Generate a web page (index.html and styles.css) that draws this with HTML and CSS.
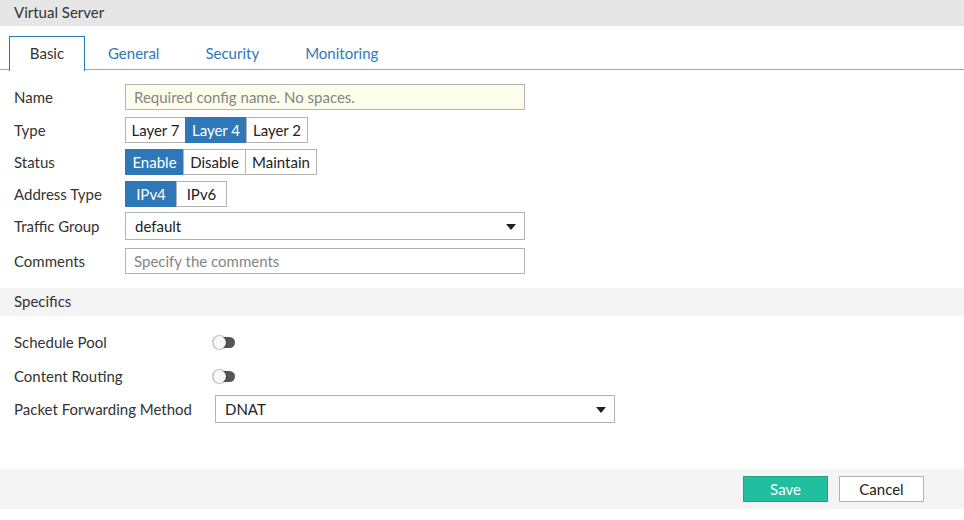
FILE: index.html
```html
<!DOCTYPE html>
<html>
<head>
<meta charset="utf-8">
<link rel="stylesheet" href="styles.css">
</head>
<body>
<div class="header">Virtual Server</div>
<div class="tabs">
  <div class="tab active">Basic</div>
  <div class="tab">General</div>
  <div class="tab">Security</div>
  <div class="tab">Monitoring</div>
</div>
<div class="form">
  <div class="row r-name">
    <div class="label">Name</div>
    <div class="input required"><span class="ph">Required config name. No spaces.</span></div>
  </div>
  <div class="row r-type">
    <div class="label">Type</div>
    <div class="seg">
      <div class="btn b1">Layer 7</div>
      <div class="btn b2 on">Layer 4</div>
      <div class="btn b2">Layer 2</div>
    </div>
  </div>
  <div class="row r-status">
    <div class="label">Status</div>
    <div class="seg">
      <div class="btn b3 on">Enable</div>
      <div class="btn b4">Disable</div>
      <div class="btn b5">Maintain</div>
    </div>
  </div>
  <div class="row r-addr">
    <div class="label">Address Type</div>
    <div class="seg">
      <div class="btn b6 on">IPv4</div>
      <div class="btn b7">IPv6</div>
    </div>
  </div>
  <div class="row r-traffic">
    <div class="label">Traffic Group</div>
    <div class="select"><span>default</span><span class="caret"></span></div>
  </div>
  <div class="row r-comments">
    <div class="label">Comments</div>
    <div class="input"><span class="ph">Specify the comments</span></div>
  </div>
</div>
<div class="band">Specifics</div>
<div class="form spec">
  <div class="row r-sched">
    <div class="label wide">Schedule Pool</div>
    <div class="toggle"><span class="knob"></span></div>
  </div>
  <div class="row r-content">
    <div class="label wide">Content Routing</div>
    <div class="toggle"><span class="knob"></span></div>
  </div>
  <div class="row r-packet">
    <div class="label wide">Packet Forwarding Method</div>
    <div class="select"><span>DNAT</span><span class="caret"></span></div>
  </div>
</div>
<div class="footer">
  <div class="fbtn save">Save</div>
  <div class="fbtn cancel">Cancel</div>
</div>
</body>
</html>
```
FILE: styles.css
```css
* { box-sizing: border-box; }
html, body { margin: 0; padding: 0; background: #fff; }
body {
  font-family: Lato, "Open Sans", "Liberation Sans", sans-serif;
  font-size: 15px;
  color: #333;
  width: 964px;
  height: 520px;
  overflow: hidden;
}
.header {
  height: 26px;
  line-height: 25px;
  background: #e6e6e6;
  padding-left: 14px;
  color: #333;
}
.tabs {
  margin-top: 10px;
  height: 34px;
  border-bottom: 1px solid #a6a6a6;
  display: flex;
  padding-left: 9px;
}
.tab {
  height: 34px;
  line-height: 33px;
  padding: 0 22px;
  color: #2f78b8;
  border: 1px solid transparent;
  border-bottom: none;
}
.tab.active {
  color: #333;
  background: #fff;
  border-color: #2f78b8;
  padding: 0;
  text-align: center;
  height: 35px;
  width: 76px;
}
.form { padding-left: 14px; }
.row { display: flex; align-items: center; }
.label { width: 111px; flex: none; color: #333; }
.label.wide { width: 199px; }
.r-name { margin-top: 14px; height: 26px; }
.r-type { margin-top: 7px; height: 26px; }
.r-status { margin-top: 6px; height: 26px; }
.r-addr { margin-top: 6px; height: 26px; }
.r-traffic { margin-top: 5px; height: 28px; }
.r-comments { margin-top: 8px; height: 26px; }
.input {
  width: 400px;
  height: 26px;
  border: 1px solid #b3b3b3;
  padding-left: 8px;
  display: flex;
  align-items: center;
  background: #fff;
}
.input.required { background: #fdfdeb; }
.ph { color: #858585; }
.seg { display: flex; height: 26px; }
.btn {
  height: 26px;
  border: 1px solid #b3b3b3;
  margin-left: -1px;
  display: flex;
  align-items: center;
  justify-content: center;
  background: #fff;
  color: #222;
  white-space: nowrap;
}
.btn:first-child { margin-left: 0; }
.btn.on { background: #2f78b8; border-color: #2f78b8; color: #fff; }
.b1 { width: 61px; }
.b2 { width: 62px; }
.b3 { width: 59px; }
.b4 { width: 63px; }
.b5 { width: 72px; }
.b6 { width: 52px; }
.b7 { width: 51px; }
.select {
  width: 400px;
  height: 28px;
  border: 1px solid #b3b3b3;
  padding: 0 8px 0 9px;
  display: flex;
  align-items: center;
  justify-content: space-between;
  background: #fff;
  color: #222;
}
.caret {
  width: 0;
  height: 0;
  border-left: 5px solid transparent;
  border-right: 5px solid transparent;
  border-top: 6px solid #222;
  margin-top: 1px;
}
.band {
  margin-top: 14px;
  height: 28px;
  line-height: 27px;
  background: #f4f4f4;
  padding-left: 14px;
}
.r-sched { margin-top: 12px; height: 28px; }
.r-content { margin-top: 6px; height: 28px; }
.r-packet { margin-top: 5px; height: 28px; }
.spec .select { margin-left: 2px; }
.toggle {
  position: relative;
  width: 22px;
  height: 11px;
  border-radius: 6px;
  background: #555;
}
.knob {
  position: absolute;
  left: 0;
  top: -1px;
  width: 13px;
  height: 13px;
  border-radius: 50%;
  background: #f7f7f7;
  box-shadow: 0 0 1px 1px rgba(0,0,0,0.25);
}
.footer {
  margin-top: 46px;
  height: 40px;
  background: #f4f4f4;
  display: flex;
  align-items: center;
  justify-content: flex-end;
  padding-right: 40px;
  gap: 11px;
}
.fbtn {
  width: 85px;
  height: 26px;
  display: flex;
  align-items: center;
  justify-content: center;
}
.save { background: #20bf9f; border: 1px solid #1fa387; color: #fff; }
.cancel { background: #fff; border: 1px solid #b3b3b3; color: #222; }
```
